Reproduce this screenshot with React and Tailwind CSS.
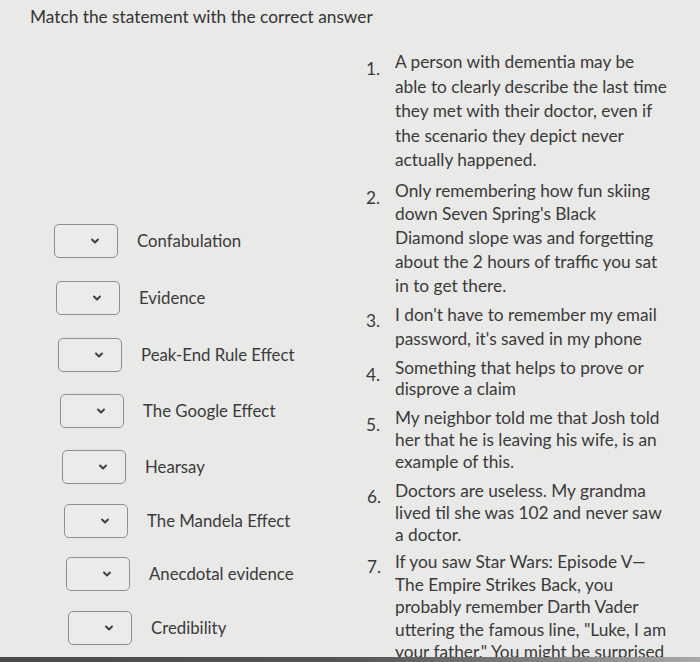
import React from 'react'

// left column: answer dropdowns (offsets follow the slight skew of the photo)
const answers = [
  { label: 'Confabulation', row: 'mt-0 ml-[54px]' },
  { label: 'Evidence', row: 'mt-[23px] ml-[56px]' },
  { label: 'Peak-End Rule Effect', row: 'mt-[23px] ml-[58px]' },
  { label: 'The Google Effect', row: 'mt-[22px] ml-[60px]' },
  { label: 'Hearsay', row: 'mt-[22px] ml-[62px]' },
  { label: 'The Mandela Effect', row: 'mt-[20px] ml-[64px]' },
  { label: 'Anecdotal evidence', row: 'mt-[19px] ml-[66px]' },
  { label: 'Credibility', row: 'mt-[20px] ml-[68px]' },
]

// right column: numbered statements, one entry per visual line
// (line height shrinks a little towards the bottom, like the photo)
const statements = [
  {
    cls: 'mt-0 leading-[24.5px]',
    num: 'mt-[8px] pl-0',
    lines: [
      'A person with dementia may be',
      'able to clearly describe the last time',
      'they met with their doctor, even if',
      'the scenario they depict never',
      'actually happened.',
    ],
  },
  {
    cls: 'mt-[6px] leading-[23.75px]',
    num: 'mt-[8px] pl-0',
    lines: [
      'Only remembering how fun skiing',
      "down Seven Spring's Black",
      'Diamond slope was and forgetting',
      'about the 2 hours of traffic you sat',
      'in to get there.',
    ],
  },
  {
    cls: 'mt-[6px] leading-[24px]',
    num: 'mt-[7px] pl-0',
    lines: ["I don't have to remember my email", "password, it's saved in my phone"],
  },
  {
    cls: 'mt-[5.5px] leading-[21px]',
    num: 'mt-[7px] pl-0',
    lines: ['Something that helps to prove or', 'disprove a claim'],
  },
  {
    cls: 'mt-[8.5px] leading-[22px]',
    num: 'mt-[7px] pl-0',
    lines: [
      'My neighbor told me that Josh told',
      'her that he is leaving his wife, is an',
      'example of this.',
    ],
  },
  {
    cls: 'mt-[7px] leading-[22px]',
    num: 'mt-[6px] pl-[1px]',
    lines: [
      'Doctors are useless. My grandma',
      'lived til she was 102 and never saw',
      'a doctor.',
    ],
  },
  {
    cls: 'mt-[5px] leading-[22.5px]',
    num: 'mt-[5px] pl-[1px]',
    lines: [
      'If you saw Star Wars: Episode V\u2014',
      'The Empire Strikes Back, you',
      'probably remember Darth Vader',
      'uttering the famous line, "Luke, I am',
      'your father." You might be surprised',
    ],
  },
]

function Dropdown() {
  return (
    <div className="w-[64px] h-[34px] rounded-[5px] border border-[#8e8e8c] bg-[#ebebe9] flex items-center justify-end pr-[17px]">
      <svg className="w-[10px] h-[10px]" viewBox="0 0 10 10" fill="none" stroke="#404040" strokeWidth="2" strokeLinecap="round" strokeLinejoin="round">
        <path d="M2 3.5l3 3 3-3" />
      </svg>
    </div>
  )
}

export default function App() {
  return (
    <div
      className="w-[700px] h-[662px] bg-[#e9e9e7] flex flex-col overflow-hidden text-[#3a3a3a]"
      style={{ fontFamily: 'Lato, "Open Sans", sans-serif' }}
    >
      <h1 className="px-[30px] pt-[6px] h-[28px] text-[17.3px] leading-[22px] font-normal text-[#333333]">
        Match the statement with the correct answer
      </h1>

      <div className="flex-1 flex items-start overflow-hidden">
        {/* Answers */}
        <div className="w-[366px] shrink-0 pt-[196px] flex flex-col">
          {answers.map((a) => (
            <div key={a.label} className={`flex items-center gap-[19px] ${a.row}`}>
              <Dropdown />
              <span className="text-[16.8px] leading-[20px] -mt-[1px]">{a.label}</span>
            </div>
          ))}
        </div>

        {/* Statements */}
        <ol className="pt-[22px] flex flex-col">
          {statements.map((s, i) => (
            <li key={i} className={`flex text-[17.3px] ${s.cls}`}>
              <span className={`w-[29px] shrink-0 leading-[22px] ${s.num}`}>{i + 1}.</span>
              <div className="flex flex-col">
                {s.lines.map((l) => (
                  <span key={l} className="whitespace-nowrap">{l}</span>
                ))}
              </div>
            </li>
          ))}
        </ol>
      </div>

      {/* dark edge of the screen at the bottom */}
      <div className="h-[5px] shrink-0 bg-gradient-to-r from-[#4a4a4c] via-[#555557] to-[#a8a8a8]" />
    </div>
  )
}
